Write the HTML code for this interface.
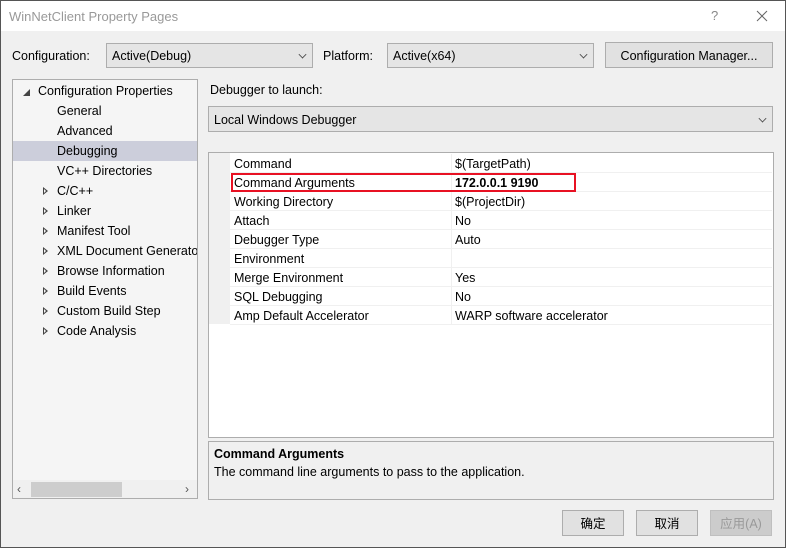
<!DOCTYPE html>
<html><head><meta charset="utf-8"><style>
*{margin:0;padding:0;box-sizing:border-box}
body{width:786px;height:548px;overflow:hidden;background:#f0f0f0;font-family:"Liberation Sans","Noto Sans CJK SC",sans-serif;font-size:12.5px;color:#000;position:relative}
.a{position:absolute;white-space:nowrap}
.frame{position:absolute;left:0;top:0;width:786px;height:548px;border:1px solid #555;pointer-events:none}
.combo{position:absolute;background:#e5e5e5;border:1px solid #adadad;padding-left:5px;line-height:24px}
.chev{position:absolute;right:6px;top:7px;width:7px;height:7px;border-right:1px solid #444;border-bottom:1px solid #444;transform:rotate(45deg) scale(.8)}
.btn{position:absolute;background:#e1e1e1;border:1px solid #adadad;text-align:center}
.row{position:absolute;left:21px;right:1px;height:19px;border-bottom:1px solid #f0f0f0;line-height:20px}
.row span{position:absolute;left:4px}
.row b,.row i{position:absolute;left:225px;font-style:normal}
.row:before{content:"";position:absolute;left:221px;top:0;bottom:0;border-left:1px solid #f0f0f0}
.tri{position:absolute;left:30px;width:0;height:0;border-top:4px solid transparent;border-bottom:4px solid transparent;border-left:5px solid #444}
.tri:after{content:"";position:absolute;left:-4px;top:-2px;border-top:2px solid transparent;border-bottom:2px solid transparent;border-left:2.5px solid #f5f5f5}
.t{position:absolute;left:44px;line-height:22px}
</style></head><body>
<div class="a" style="left:0;top:0;width:786px;height:31px;background:#fff"></div>
<div class="a" style="left:9px;top:9px;color:#999;font-size:13px">WinNetClient Property Pages</div>
<div class="a" style="left:711px;top:8px;color:#888;font-size:13px">?</div>
<svg class="a" style="left:756px;top:10px" width="12" height="12"><path d="M1 1L11 11M11 1L1 11" stroke="#666" stroke-width="1"/></svg>

<div class="a" style="left:12px;top:49px">Configuration:</div>
<div class="combo" style="left:106px;top:43px;width:207px;height:25px">Active(Debug)<div class="chev"></div></div>
<div class="a" style="left:323px;top:49px">Platform:</div>
<div class="combo" style="left:387px;top:43px;width:207px;height:25px">Active(x64)<div class="chev"></div></div>
<div class="btn" style="left:605px;top:42px;width:168px;height:26px;line-height:26px">Configuration Manager...</div>

<div class="a" style="left:12px;top:79px;width:186px;height:420px;background:#f5f5f5;border:1px solid #adadad">
 <div class="a" style="left:10px;top:9px;width:0;height:0;border-left:7px solid transparent;border-bottom:7px solid #444"></div>
 <div class="t" style="left:25px;top:0">Configuration Properties</div>
 <div class="t" style="top:20px">General</div>
 <div class="t" style="top:40px">Advanced</div>
 <div class="a" style="left:0;top:61px;width:184px;height:20px;background:#cccedb"></div>
 <div class="t" style="top:60px">Debugging</div>
 <div class="t" style="top:80px">VC++ Directories</div>
 <div class="tri" style="top:107px"></div><div class="t" style="top:100px">C/C++</div>
 <div class="tri" style="top:127px"></div><div class="t" style="top:120px">Linker</div>
 <div class="tri" style="top:147px"></div><div class="t" style="top:140px">Manifest Tool</div>
 <div class="tri" style="top:167px"></div><div class="t" style="top:160px;width:140px;overflow:hidden">XML Document Generator</div>
 <div class="tri" style="top:187px"></div><div class="t" style="top:180px">Browse Information</div>
 <div class="tri" style="top:207px"></div><div class="t" style="top:200px">Build Events</div>
 <div class="tri" style="top:227px"></div><div class="t" style="top:220px">Custom Build Step</div>
 <div class="tri" style="top:247px"></div><div class="t" style="top:240px">Code Analysis</div>
 <div class="a" style="left:0;top:400px;width:184px;height:18px;background:#f0f0f0"></div>
 <div class="a" style="left:18px;top:402px;width:91px;height:15px;background:#cdcdcd"></div>
 <div class="a" style="left:4px;top:402px;color:#555;font-size:12px">&lsaquo;</div>
 <div class="a" style="left:172px;top:402px;color:#555;font-size:12px">&rsaquo;</div>
</div>

<div class="a" style="left:210px;top:83px">Debugger to launch:</div>
<div class="combo" style="left:208px;top:106px;width:565px;height:26px;line-height:26px">Local Windows Debugger<div class="chev" style="top:8px"></div></div>

<div class="a" style="left:208px;top:152px;width:566px;height:286px;background:#fff;border:1px solid #adadad">
 <div class="a" style="left:0;top:0;width:21px;height:171px;background:#f0f0f0"></div>
 <div class="row" style="top:1px"><span>Command</span><i>$(TargetPath)</i></div>
 <div class="row" style="top:20px"><span>Command Arguments</span><b>172.0.0.1 9190</b></div>
 <div class="row" style="top:39px"><span>Working Directory</span><i>$(ProjectDir)</i></div>
 <div class="row" style="top:58px"><span>Attach</span><i>No</i></div>
 <div class="row" style="top:77px"><span>Debugger Type</span><i>Auto</i></div>
 <div class="row" style="top:96px"><span>Environment</span></div>
 <div class="row" style="top:115px"><span>Merge Environment</span><i>Yes</i></div>
 <div class="row" style="top:134px"><span>SQL Debugging</span><i>No</i></div>
 <div class="row" style="top:153px"><span>Amp Default Accelerator</span><i>WARP software accelerator</i></div>
 <div class="a" style="left:22px;top:20px;width:345px;height:19px;border:2px solid #e81123"></div>
</div>

<div class="a" style="left:208px;top:441px;width:566px;height:59px;border:1px solid #adadad">
 <div class="a" style="left:5px;top:5px;font-weight:bold">Command Arguments</div>
 <div class="a" style="left:5px;top:23px">The command line arguments to pass to the application.</div>
</div>

<div class="btn" style="left:562px;top:510px;width:62px;height:26px;line-height:26px">确定</div>
<div class="btn" style="left:636px;top:510px;width:62px;height:26px;line-height:26px">取消</div>
<div class="btn" style="left:710px;top:510px;width:62px;height:26px;line-height:26px;color:#999;background:#ccc;border-color:#bfbfbf">应用(A)</div>
<div class="frame"></div>
</body></html>
